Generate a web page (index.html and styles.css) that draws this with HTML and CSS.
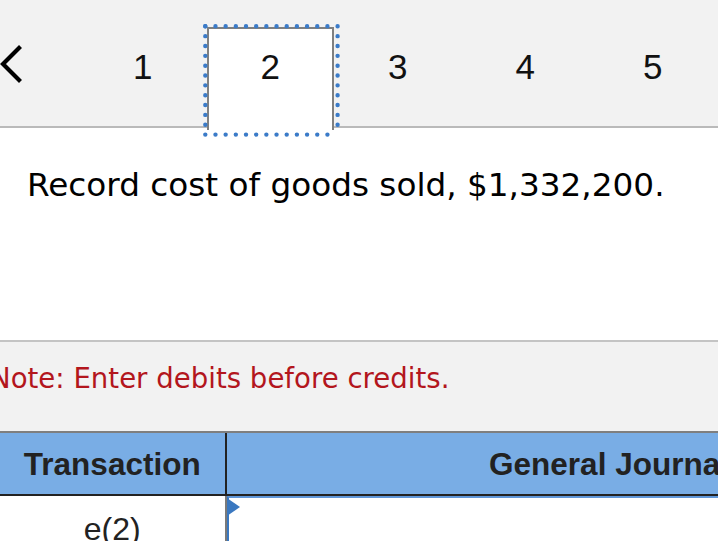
FILE: index.html
```html
<!DOCTYPE html>
<html lang="en">
<head>
<meta charset="utf-8">
<title>Journal entry</title>
<link rel="stylesheet" href="styles.css">
</head>
<body>
<div class="page">
  <nav class="pager">
    <div class="prev">
      <svg class="chev" width="24" height="40" viewBox="0 0 24 40" aria-hidden="true">
        <path d="M20.5 2.5 L3 20 L20.5 37.5" fill="none" stroke="#000" stroke-width="4.2"/>
      </svg>
    </div>
    <div class="tab">1</div>
    <div class="tab active">2
      <svg class="focus" width="138" height="114" viewBox="0 0 138 114" aria-hidden="true">
        <g stroke="#3b7bc8" stroke-width="4.4" stroke-linecap="round" fill="none" stroke-dasharray="0 1">
          <line x1="2.3" y1="2.3" x2="134.6" y2="2.3" pathLength="13"/>
          <line x1="2.3" y1="110.6" x2="134.6" y2="110.6" pathLength="13"/>
          <line x1="2.3" y1="2.3" x2="2.3" y2="110.6" pathLength="11"/>
          <line x1="134.6" y1="2.3" x2="134.6" y2="110.6" pathLength="11"/>
        </g>
      </svg>
    </div>
    <div class="tab">3</div>
    <div class="tab">4</div>
    <div class="tab">5</div>
  </nav>

  <section class="prompt">Record cost of goods sold, $1,332,200.</section>

  <div class="note">Note: Enter debits before credits.</div>

  <div class="journal">
    <div class="th th-first">Transaction</div>
    <div class="th">General Journal</div>
    <div class="td td-first">e(2)</div>
    <div class="td td-input"></div>
  </div>
</div>
</body>
</html>
```

FILE: styles.css
```css
html, body {
  margin: 0;
  padding: 0;
  background: #fff;
}

.page {
  width: 718px;
  height: 541px;
  overflow: hidden;
}

/* ---------- pager ---------- */
.pager {
  display: flex;
  height: 126px;
  background: #f2f2f2;
  border-bottom: 2px solid #bababa;
}

.prev {
  flex: none;
  width: 79px;
  padding-top: 44px;
  box-sizing: border-box;
}

.chev {
  display: block;
}

.tab {
  flex: none;
  width: 127.5px;
  height: 103px;
  margin-top: 27px;
  box-sizing: border-box;
  border: 2px solid transparent;
  border-bottom: 0;
  padding-top: 20px;
  text-align: center;
  font-family: "Liberation Sans", Arial, sans-serif;
  font-size: 35px;
  line-height: 35px;
  color: #111;
}

.tab.active {
  position: relative;
  background: #fff;
  border-color: #808080;
}

.focus {
  position: absolute;
  left: -5.5px;
  top: -5px;
}

/* ---------- prompt ---------- */
.prompt {
  height: 212px;
  box-sizing: border-box;
  padding: 38px 0 0 27px;
  font-family: "DejaVu Sans", Verdana, sans-serif;
  font-size: 32.7px;
  color: #000;
  background: #fff;
}

/* ---------- note ---------- */
.note {
  height: 93px;
  box-sizing: border-box;
  border-top: 2px solid #c4c4c4;
  border-bottom: 2px solid #7f7f7f;
  padding-top: 19.5px;
  background: #f2f2f2;
  font-family: "DejaVu Sans", Verdana, sans-serif;
  font-size: 27.6px;
  color: #b3161d;
  text-indent: -10px;
  white-space: nowrap;
}

/* ---------- journal table ---------- */
.journal {
  display: grid;
  grid-template-columns: 226.5px 765px;
  width: 991.5px;
}

.th {
  height: 63px;
  box-sizing: border-box;
  padding-top: 12.5px;
  background: #79ade5;
  border-bottom: 2px solid #222;
  text-align: center;
  font-family: "Liberation Sans", Arial, sans-serif;
  font-weight: bold;
  font-size: 31.5px;
  color: #222;
  white-space: nowrap;
}

.th-first {
  border-right: 2px solid #222;
}

.td {
  height: 60px;
  box-sizing: border-box;
  background: #fff;
}

.td-first {
  padding-top: 14.5px;
  border-right: 2px solid #7a7a7a;
  text-align: center;
  font-family: "Liberation Sans", Arial, sans-serif;
  font-size: 32px;
  color: #222;
}

.td-input {
  position: relative;
  border-top: 2px solid #5f96d8;
  border-left: 2px solid #3a78c0;
}

.td-input::before {
  content: "";
  position: absolute;
  left: -2px;
  top: 0;
  width: 0;
  height: 0;
  border-left: 13px solid #3a78c0;
  border-top: 9.5px solid transparent;
  border-bottom: 9.5px solid transparent;
}
```
